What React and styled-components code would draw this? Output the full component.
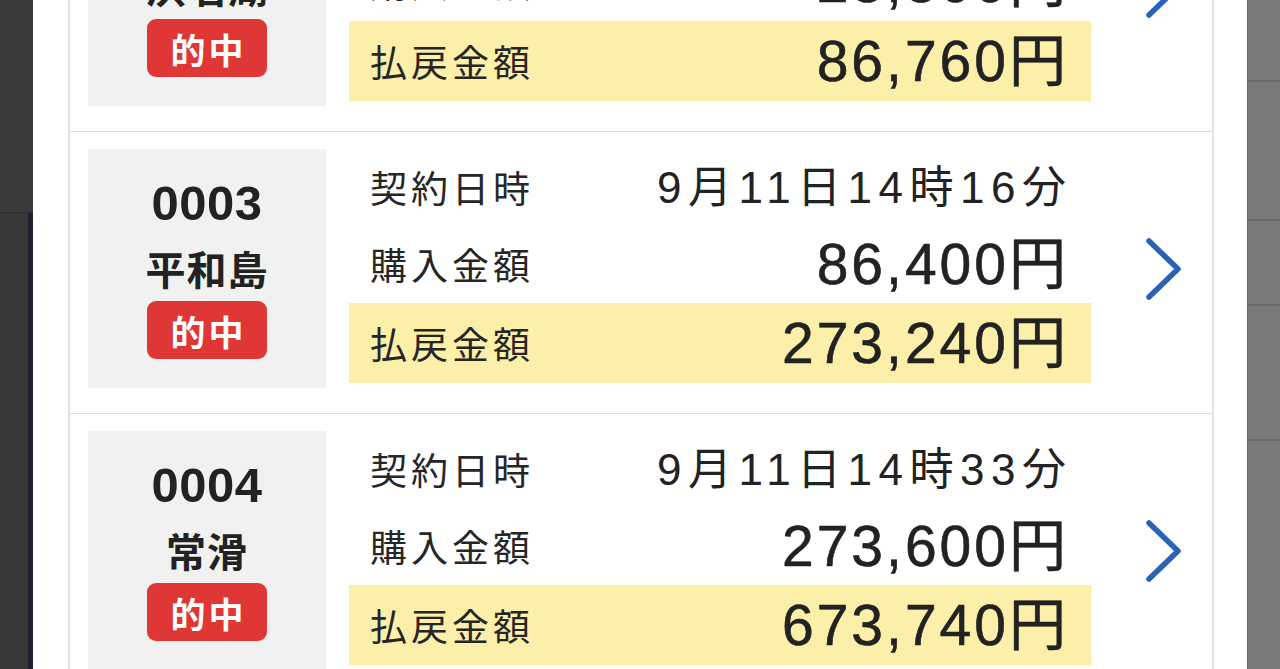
import React from 'react'
import styled, { createGlobalStyle } from 'styled-components'

const GlobalStyle = createGlobalStyle`
  html, body, #root {
    margin: 0;
    height: 100%;
  }
  body {
    background: #7b7b7b;
    font-family: "Noto Sans CJK JP", sans-serif;
    color: #222;
  }
`

const cards = [
    { no: '0002', place: '浜名湖', date: '9月11日13時52分', buy: '28,800円', pay: '86,760円' },
    { no: '0003', place: '平和島', date: '9月11日14時16分', buy: '86,400円', pay: '273,240円' },
    { no: '0004', place: '常滑', date: '9月11日14時33分', buy: '273,600円', pay: '673,740円' },
]

const Chevron = () => (
    <svg width="40" height="64" viewBox="0 0 40 64">
        <polyline points="4,4 33,32 4,60" fill="none" stroke="#2a63b6" strokeWidth="5.5" strokeLinecap="round" strokeLinejoin="round" />
    </svg>
)

class App extends React.Component {
    render() {
        return (
            <Page>
                <GlobalStyle />
                <LeftEdge>
                    <EdgeTop />
                    <EdgeBottom />
                </LeftEdge>

                <Panel>
                    {/* list is scrolled: the first card sits partly above the top */}
                    <List>
                        {cards.map((c) => (
                            <Card key={c.no}>
                                <Race>
                                    <RaceNo>{c.no}</RaceNo>
                                    <Place>{c.place}</Place>
                                    <Badge>的中</Badge>
                                </Race>
                                <Details>
                                    <Row>
                                        <Label>契約日時</Label>
                                        <Value small>{c.date}</Value>
                                    </Row>
                                    <Row>
                                        <Label>購入金額</Label>
                                        <Value>{c.buy}</Value>
                                    </Row>
                                    <Row highlight>
                                        <Label>払戻金額</Label>
                                        <Value>{c.pay}</Value>
                                    </Row>
                                </Details>
                                <Arrow>
                                    <Chevron />
                                </Arrow>
                            </Card>
                        ))}
                    </List>
                </Panel>

                <RightEdge>
                    <Segment h={80} />
                    <Segment h={137} />
                    <Segment h={83} />
                    <Segment h={133} />
                    <Segment h={240} />
                </RightEdge>
            </Page>
        )
    }
}

export default App

const Page = styled.div`
    display: flex;
    height: 100vh;
    overflow: hidden;
`

const LeftEdge = styled.div`
    width: 33px;
    flex-shrink: 0;
    display: flex;
    flex-direction: column;
`

const EdgeTop = styled.div`
    height: 212px;
    background: #3b3b3b;
    border-bottom: 1px solid #303030;
`

const EdgeBottom = styled.div`
    flex: 1;
    background: #383838;
    border-right: 5px solid #1e2230;
`

const RightEdge = styled.div`
    width: 32px;
    flex-shrink: 0;
    display: flex;
    flex-direction: column;
    background: #7b7b7b;
    border-left: 1px solid #6a6a6a;
`

const Segment = styled.div`
    height: ${(p) => p.h}px;
    flex-shrink: 0;
    border-bottom: 2px solid #6b6b6b;
`

const Panel = styled.div`
    flex: 1;
    background: #fff;
    padding: 0 33px 0 35px;
    overflow: hidden;
`

const List = styled.div`
    margin-top: -150px;
    border-left: 2px solid #e3e3e3;
    border-right: 2px solid #e3e3e3;
`

const Card = styled.div`
    display: grid;
    grid-template-columns: 238px 742px 1fr;
    column-gap: 23px;
    padding: 17px 0 25px 18px;
    border-bottom: 1px solid #dcdcdc;
`

const Race = styled.div`
    height: 239px;
    background: #f1f1f1;
    display: flex;
    flex-direction: column;
    align-items: center;
    justify-content: center;
`

const RaceNo = styled.div`
    font-family: "Liberation Sans", "Noto Sans CJK JP", sans-serif;
    font-weight: 700;
    font-size: 49px;
    letter-spacing: 0.5px;
    line-height: 50px;
    color: #222;
`

const Place = styled.div`
    margin-top: 15px;
    font-weight: 700;
    font-size: 40px;
    letter-spacing: 1px;
    line-height: 50px;
    color: #222;
`

const Badge = styled.div`
    margin-top: 8px;
    width: 120px;
    height: 58px;
    border-radius: 9px;
    background: #df3636;
    color: #fff;
    font-weight: 700;
    font-size: 35px;
    letter-spacing: 3px;
    text-indent: 3px;
    display: flex;
    align-items: center;
    justify-content: center;
`

const Details = styled.div`
    display: grid;
    grid-template-rows: 77px 77px 80px;
`

const Row = styled.div`
    display: flex;
    align-items: center;
    justify-content: space-between;
    padding: 0 25px 0 21px;
    background: ${(p) => (p.highlight ? '#fcefa9' : 'transparent')};
`

const Label = styled.span`
    font-size: 37px;
    letter-spacing: 4px;
    line-height: 1;
    color: #262626;
`

const Value = styled.span`
    font-family: "Liberation Sans", "Noto Sans CJK JP", sans-serif;
    font-size: ${(p) => (p.small ? '44px' : '57px')};
    letter-spacing: ${(p) => (p.small ? '6.5px' : '3px')};
    margin-right: ${(p) => (p.small ? '-6.5px' : '-3px')};
    -webkit-text-stroke: ${(p) => (p.small ? '0' : '0.6px #222')};
    line-height: 1;
    color: #222;
`

const Arrow = styled.div`
    display: flex;
    align-items: center;
    padding-left: 31px;
`
